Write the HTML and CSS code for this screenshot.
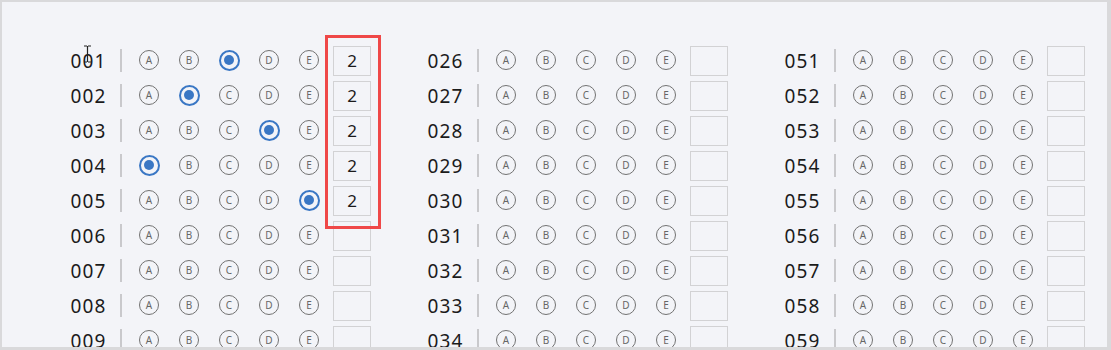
FILE: index.html
```html
<!DOCTYPE html>
<html lang="en">
<head>
    <meta charset="UTF-8">
    <title>Answer sheet</title>
    <link rel="stylesheet" href="styles.css">
</head>
<body>

<div class="sheet">
    <div class="columns" id="columns"></div>
    <svg class="cursor" width="9" height="18" viewBox="0 0 9 18">
        <path d="M1 1h3M5 1h3M4.5 1v16M1 17h3M5 17h3" stroke="#222" stroke-width="1.2" fill="none"/>
    </svg>
</div>

<script>
    // respuestas marcadas: numero de pregunta -> letra
    const marked = { 1: 'C', 2: 'B', 3: 'D', 4: 'A', 5: 'E' };
    const values = { 1: '2', 2: '2', 3: '2', 4: '2', 5: '2' };
    const starts = [1, 26, 51];
    const letters = ['A', 'B', 'C', 'D', 'E'];

    const columns = document.getElementById('columns');

    starts.forEach((start, i) => {
        const col = document.createElement('div');
        col.className = 'column';
        for (let n = start; n < start + 9; n++) {
            const row = document.createElement('div');
            row.className = 'row';
            let html = '<span class="num">' + String(n).padStart(3, '0') + '</span><span class="sep"></span><span class="bubbles">';
            letters.forEach(l => {
                if (marked[n] === l) {
                    html += '<span class="bubble selected"></span>';
                } else {
                    html += '<span class="bubble">' + l + '</span>';
                }
            });
            html += '</span><span class="answer">' + (values[n] || '') + '</span>';
            row.innerHTML = html;
            col.appendChild(row);
        }
        if (i === 0) {
            const hl = document.createElement('div');
            hl.className = 'highlight';
            col.appendChild(hl);
        }
        columns.appendChild(col);
    });
</script>

</body>
</html>
```

FILE: styles.css
```css
body {
    margin: 0;
    font-family: "Noto Sans", "Open Sans", sans-serif;
}
.sheet {
    position: relative;
    width: 1111px;
    height: 350px;
    box-sizing: border-box;
    border-style: solid;
    border-color: #d9d9db;
    border-width: 2px 4px 3px 2px;
    background-color: #f3f4f8;
    overflow: hidden;
    padding: 41px 0 0 61px;
}
.columns {
    display: flex;
    gap: 49px;
}
.column {
    position: relative;
    width: 308px;
}
.row {
    display: flex;
    align-items: center;
    height: 35px;
}
.num {
    width: 51px;
    text-align: center;
    font-size: 19px;
    letter-spacing: 1.2px;
    color: #1b1b1b;
    margin-right: 6px;
}
.sep {
    width: 2px;
    height: 23px;
    background-color: #c9c9cc;
    margin-right: 17px;
}
.bubbles {
    display: flex;
    gap: 20px;
    margin-right: 14px;
}
.bubble {
    width: 20px;
    height: 20px;
    box-sizing: border-box;
    border: 1.5px solid #727272;
    border-radius: 50%;
    display: flex;
    align-items: center;
    justify-content: center;
    font-size: 10px;
    color: #666666;
    margin-top: -1px;
}
.bubble.selected {
    position: relative;
    width: 21px;
    height: 21px;
    margin: -1px -0.5px 0 -0.5px;
    border: 2.5px solid #3a77c4;
}
.bubble.selected::after {
    content: "";
    width: 10px;
    height: 10px;
    border-radius: 50%;
    background-color: #3a77c4;
}
.answer {
    width: 38px;
    height: 30px;
    box-sizing: border-box;
    border: 1px solid #d2d2d4;
    display: flex;
    align-items: center;
    justify-content: center;
    font-size: 17px;
    color: #1b1b1b;
}
/* marco rojo sobre las respuestas */
.highlight {
    position: absolute;
    left: 262px;
    top: -8px;
    width: 56px;
    height: 194px;
    box-sizing: border-box;
    border: 3px solid #ef4848;
}
.cursor {
    position: absolute;
    left: 81px;
    top: 43px;
}
```
